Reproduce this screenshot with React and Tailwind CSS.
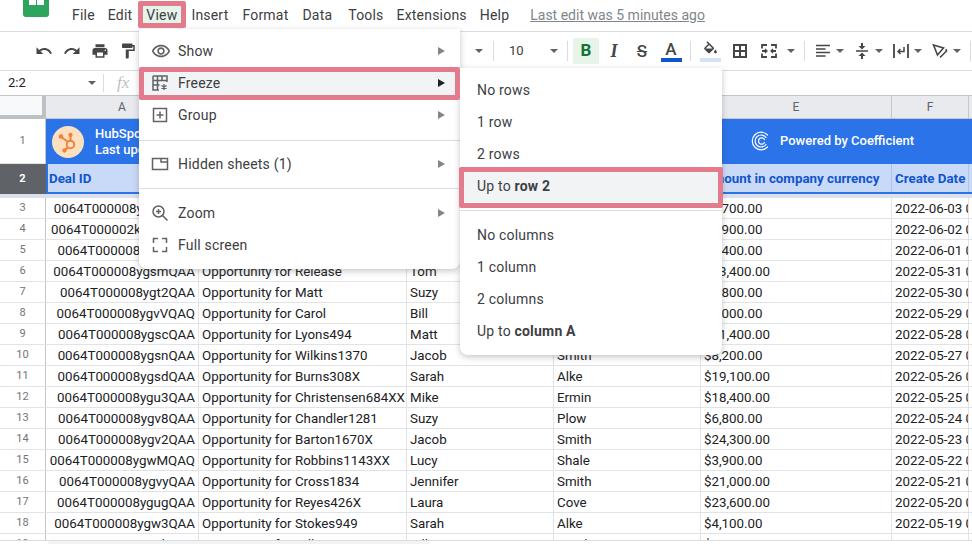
import React from "react";

const rows = [
  [3, "0064T000008ygvmQAA", "Opportunity for Hammond", "Lucy", "Smith", "$9,700.00", "2022-06-03 00:00"],
  [4, "0064T000002kwNHQAY", "Opportunity for Sutton", "Mike", "Plow", "$4,900.00", "2022-06-02 00:00"],
  [5, "0064T000008ygsoQAA", "Opportunity for Dean", "Laura", "Cove", "$2,400.00", "2022-06-01 00:00"],
  [6, "0064T000008ygsmQAA", "Opportunity for Release", "Tom", "Ermin", "$13,400.00", "2022-05-31 00:00"],
  [7, "0064T000008ygt2QAA", "Opportunity for Matt", "Suzy", "Alke", "$7,800.00", "2022-05-30 00:00"],
  [8, "0064T000008ygvVQAQ", "Opportunity for Carol", "Bill", "Shale", "$5,000.00", "2022-05-29 00:00"],
  [9, "0064T000008ygscQAA", "Opportunity for Lyons494", "Matt", "Plow", "$11,400.00", "2022-05-28 00:00"],
  [10, "0064T000008ygsnQAA", "Opportunity for Wilkins1370", "Jacob", "Smith", "$8,200.00", "2022-05-27 00:00"],
  [11, "0064T000008ygsdQAA", "Opportunity for Burns308X", "Sarah", "Alke", "$19,100.00", "2022-05-26 00:00"],
  [12, "0064T000008ygu3QAA", "Opportunity for Christensen684XX", "Mike", "Ermin", "$18,400.00", "2022-05-25 00:00"],
  [13, "0064T000008ygv8QAA", "Opportunity for Chandler1281", "Suzy", "Plow", "$6,800.00", "2022-05-24 00:00"],
  [14, "0064T000008ygv2QAA", "Opportunity for Barton1670X", "Jacob", "Smith", "$24,300.00", "2022-05-23 00:00"],
  [15, "0064T000008ygwMQAQ", "Opportunity for Robbins1143XX", "Lucy", "Shale", "$3,900.00", "2022-05-22 00:00"],
  [16, "0064T000008ygvyQAA", "Opportunity for Cross1834", "Jennifer", "Smith", "$21,000.00", "2022-05-21 00:00"],
  [17, "0064T000008ygugQAA", "Opportunity for Reyes426X", "Laura", "Cove", "$23,600.00", "2022-05-20 00:00"],
  [18, "0064T000008ygw3QAA", "Opportunity for Stokes949", "Sarah", "Alke", "$4,100.00", "2022-05-19 00:00"],
  [19, "0064T000008ygwkQAA", "Opportunity for Hill", "Bill", "Smith", "$1,000.00", "2022-05-18 00:00"],
];

function Mat({ d, size = 18, className = "" }) {
  return (
    <svg viewBox="0 0 24 24" width={size} height={size} fill="currentColor" className={className}>
      <path d={d} />
    </svg>
  );
}

const icons = {
  undo: "M12.5 8c-2.65 0-5.05.99-6.9 2.6L2 7v9h9l-3.62-3.62c1.39-1.16 3.16-1.88 5.12-1.88 3.54 0 6.55 2.31 7.6 5.5l2.37-.78C21.08 11.03 17.15 8 12.5 8z",
  redo: "M18.4 10.6C16.55 8.99 14.15 8 11.5 8c-4.65 0-8.58 3.03-9.96 7.22L3.9 16c1.05-3.19 4.05-5.5 7.6-5.5 1.95 0 3.73.72 5.12 1.88L13 16h9V7l-3.6 3.6z",
  print: "M19 8H5c-1.66 0-3 1.34-3 3v6h4v4h12v-4h4v-6c0-1.66-1.34-3-3-3zm-3 11H8v-5h8v5zm3-7c-.55 0-1-.45-1-1s.45-1 1-1 1 .45 1 1-.45 1-1 1zm-1-9H6v4h12V3z",
  paint: "M18 4V3c0-.55-.45-1-1-1H5c-.55 0-1 .45-1 1v4c0 .55.45 1 1 1h12c.55 0 1-.45 1-1V6h1v4H9v11c0 .55.45 1 1 1h2c.55 0 1-.45 1-1v-9h8V4h-3z",
  eye: "M12 6.5c3.79 0 7.17 2.13 8.82 5.5-1.65 3.37-5.02 5.5-8.82 5.5S4.83 15.37 3.18 12C4.83 8.63 8.21 6.5 12 6.5m0-2C7 4.5 2.73 7.61 1 12c1.73 4.39 6 7.5 11 7.5s9.27-3.11 11-7.5c-1.73-4.39-6-7.5-11-7.5zm0 5c1.38 0 2.5 1.12 2.5 2.5s-1.12 2.5-2.5 2.5-2.5-1.12-2.5-2.5 1.12-2.5 2.5-2.5m0-2c-2.48 0-4.5 2.02-4.5 4.5s2.02 4.5 4.5 4.5 4.5-2.02 4.5-4.5-2.02-4.5-4.5-4.5z",
};

function Caret({ className = "" }) {
  return <div className={"w-0 h-0 border-x-[4px] border-x-transparent border-t-[4px] border-t-[#5f6368] " + className} />;
}

function Divider() {
  return <div className="w-px h-5 bg-[#dadce0]" />;
}

function TopBar() {
  return (
    <div className="h-[32px] border-b border-[#dadce0] flex items-start relative">
      <div className="w-[26px] h-[17px] ml-[23px] bg-[#2da55c] rounded-b-[3px] flex justify-center items-start shrink-0">
        <div className="w-[15px] h-[5px] bg-white flex justify-center">
          <div className="w-px h-full bg-[#2da55c]" />
        </div>
      </div>
      <div className="flex items-center h-[30px] ml-[23px] gap-[14px] text-[14px] tracking-[0.2px] text-[#3c4043]">
        <span>File</span>
        <span className="-ml-[1px]">Edit</span>
        <span className="bg-[#e6f4ea] -ml-[3px] pl-[3px] pr-[6px]">View</span>
        <span className="-ml-[6px]">Insert</span>
        <span>Format</span>
        <span>Data</span>
        <span className="ml-[2px]">Tools</span>
        <span className="-ml-[1px]">Extensions</span>
        <span className="-ml-[1px]">Help</span>
        <span className="ml-[7px] tracking-normal text-[#80868b] underline">Last edit was 5 minutes ago</span>
      </div>
    </div>
  );
}

function Toolbar() {
  return (
    <div className="h-[39px] border-b border-[#dadce0] flex items-center text-[#444746]">
      <div className="flex items-center gap-[10px] ml-[35px] w-[440px]">
        <Mat d={icons.undo} />
        <Mat d={icons.redo} />
        <Mat d={icons.print} />
        <Mat d={icons.paint} />
      </div>
      <Caret />
      <div className="ml-[10px]"><Divider /></div>
      <span className="ml-[15px] w-[31px] text-[13px] text-[#3c4043]">10</span>
      <Caret className="ml-[10px]" />
      <div className="ml-[9px]"><Divider /></div>
      <div className="ml-[5px] w-[26px] h-[26px] bg-[#e6f4ea] rounded-[2px] flex items-center justify-center font-bold text-[17px] text-[#137333]">B</div>
      <div className="w-[28px] text-center ml-[1px] italic font-semibold font-['Liberation_Serif',serif] text-[18px] leading-none text-[#444746]">I</div>
      <div className="w-[28px] text-center font-medium text-[17px] leading-none line-through text-[#444746]">S</div>
      <div className="w-[28px] ml-[1px] flex flex-col items-center">
        <span className="text-[17px] leading-[17px] font-medium text-[#444746]">A</span>
        <div className="w-[21px] h-[4px] bg-[#1155cc]" />
      </div>
      <div className="ml-[5px]"><Divider /></div>
      <div className="ml-[9px] flex flex-col items-center w-[21px]">
        <svg viewBox="0 0 24 24" width="17" height="17" fill="currentColor">
          <path d="M16.6 9.2 7.6 0.5 6.2 1.9l2.4 2.4-5.2 5.2c-.6.6-.6 1.5 0 2.1l5.500 5.500c.3.3.7.4 1 .4s.8-.1 1-.4l5.500-5.500c.7-.5.7-1.500.1-2.400zM5.200 10.500 10 5.700l4.800 4.800H5.200zM19 12s-2 2.200-2 3.500c0 1.100.9 2 2 2s2-.9 2-2c0-1.300-2-3.500-2-3.500z" />
        </svg>
        <div className="w-[21px] h-[4px] bg-[#d3e3f5]" />
      </div>
      <svg viewBox="0 0 18 18" width="18" height="18" className="ml-[10px]" fill="none" stroke="currentColor" strokeWidth="2">
        <path d="M3 3h12v12H3zM9 3v12M3 9h12" />
      </svg>
      <svg viewBox="0 0 18 18" width="18" height="18" className="ml-[11px]" fill="none" stroke="currentColor" strokeWidth="1.800">
        <path d="M7 3H2v3.500M11 3h5v3.500M7 15H2v-3.500M11 15h5v-3.500M2 9h4.500M11.500 9H16" />
        <path d="M5 7l2 2-2 2M13 7l-2 2 2 2" strokeWidth="1.300" />
      </svg>
      <Caret className="ml-[9px]" />
      <div className="ml-[9px]"><Divider /></div>
      <svg viewBox="0 0 18 18" width="18" height="18" className="ml-[9px]" fill="none" stroke="currentColor" strokeWidth="1.700">
        <path d="M2 3.500h14M2 7h9.500M2 10.500h14M2 14h9.500" />
      </svg>
      <Caret className="ml-[4px]" />
      <svg viewBox="0 0 18 18" width="18" height="18" className="ml-[9px]" fill="currentColor">
        <path d="M8 1h2v3h2.500L9 7.500 5.500 4H8zM3 8.200h12v1.600H3zM9 10.500l3.500 3.500H10v3H8v-3H5.500z" />
      </svg>
      <Caret className="ml-[4px]" />
      <svg viewBox="0 0 18 18" width="18" height="18" className="ml-[9px]" fill="none" stroke="currentColor" strokeWidth="1.800">
        <path d="M2 2v14M16 2v14" />
        <path d="M12 5v4.500H7M8.500 7 6 9.500 8.500 12" strokeWidth="1.500" />
      </svg>
      <Caret className="ml-[4px]" />
      <svg viewBox="0 0 18 18" width="18" height="18" className="ml-[9px]" fill="none" stroke="currentColor" strokeWidth="1.600">
        <path d="M2.500 3l10 3-6 7zM9 15.500l7-7M14.500 7.500l1.500 1" />
      </svg>
      <Caret className="ml-[4px]" />
      <div className="ml-[9px]"><Divider /></div>
    </div>
  );
}

function FormulaBar() {
  return (
    <div className="h-[24px] flex items-center relative">
      <span className="ml-[8px] w-[80px] text-[13px] text-[#202124]">2:2</span>
      <Caret />
      <div className="ml-[7px]"><div className="w-px h-[18px] bg-[#dadce0]" /></div>
      <span className="ml-[13px] italic text-[17px] text-[#bdc1c6] font-['Liberation_Serif',serif]">fx</span>
    </div>
  );
}

function RowHead({ n, active, className = "" }) {
  return (
    <div className={"w-[46px] shrink-0 flex items-center justify-center text-[11px] border-r " + (active ? "bg-[#5f6368] text-white font-bold border-[#5f6368] " : "bg-white text-[#70757a] border-[#c4c7c5] ") + className}>
      {n}
    </div>
  );
}

function Cell({ w, right, children }) {
  return (
    <div className={"shrink-0 h-full border-r border-[#e1e3e6] px-[3px] pt-[1px] overflow-hidden whitespace-nowrap flex items-center " + w + (right ? " justify-end" : "")}>
      {children}
    </div>
  );
}

function ColHeads() {
  const cols = [
    ["A", "w-[153px]"],
    ["B", "w-[208px]"],
    ["C", "w-[147px]"],
    ["D", "w-[147px]"],
    ["E", "w-[191px]"],
    ["F", "w-[77px]"],
    ["", "w-[10px]"],
  ];
  return (
    <div className="h-[24px] flex bg-[#e8eaed] border-t border-[#c4c7c5] text-[12px] text-[#5f6368]">
      <div className="w-[46px] shrink-0 border-r-[4px] border-b-[4px] border-[#bdc1c6] bg-[#f8f9fa]" />
      {cols.map(([c, w]) => (
        <div key={c} className={"shrink-0 border-r border-b border-[#c4c7c5] flex items-center justify-center " + w}>{c}</div>
      ))}
    </div>
  );
}

function BannerRow() {
  return (
    <div className="h-[45px] flex">
      <RowHead n="1" className="border-b border-b-[#e1e3e6]" />
      <div className="flex-1 bg-[#2a73e8] flex items-center text-white text-[13px] font-medium relative overflow-hidden">
        <div className="ml-[6px] w-[32px] h-[32px] rounded-full bg-[#fde0bf] flex items-center justify-center shrink-0">
          <svg viewBox="0 0 24 24" width="24" height="24" fill="none" stroke="#f0803c" strokeWidth="1.900" strokeLinecap="round">
            <circle cx="14.500" cy="14.500" r="3.800" />
            <path d="M14.500 10.500V6M11.500 11.500 6 7.500M11.800 17.500 9 20" />
            <circle cx="14.500" cy="5" r="1.200" fill="#f0803c" />
            <circle cx="5" cy="6.500" r="1.400" fill="#f0803c" />
            <circle cx="8.500" cy="20.500" r="1.200" fill="#f0803c" />
          </svg>
        </div>
        <div className="ml-[11px] leading-[16px]">
          <div>HubSpot Deals</div>
          <div>Last updated</div>
        </div>
        <div className="absolute left-[705px] top-0 h-full flex items-center gap-[9px] pb-[1px]">
          <svg viewBox="0 0 20 20" width="20" height="20" fill="none" stroke="white" strokeWidth="1.200" strokeLinecap="round">
            <path d="M16.500 4A8.800 8.800 0 1 0 16.500 16" />
            <path d="M15 6.500A6 6 0 1 0 15 13.500" />
            <path d="M13.500 8.500A3.200 3.200 0 1 0 13.500 11.500" />
          </svg>
          <span className="text-[13px]">Powered by Coefficient</span>
        </div>
      </div>
    </div>
  );
}

function HeaderRow() {
  const h = "font-bold text-[#1155cc]";
  return (
    <div className="h-[30px] flex">
      <RowHead n="2" active />
      <div className="flex-1 flex bg-[#c9daf8] border-b-2 border-[#2a73e8] text-[13.33px]">
        <Cell w="w-[153px] !pl-[1px] border-l-2 border-l-[#2a73e8] !border-r-[#a9c4f0]"><span className={h}>Deal ID</span></Cell>
        <Cell w="w-[208px] !border-r-[#a9c4f0]"><span className={h}>Deal Name</span></Cell>
        <Cell w="w-[147px] !border-r-[#a9c4f0]"><span className={h}>Owner</span></Cell>
        <Cell w="w-[147px] !border-r-[#a9c4f0]"><span className={h}>Last</span></Cell>
        <Cell w="w-[191px] !border-r-[#a9c4f0]"><span className={h}>Amount in company currency</span></Cell>
        <Cell w="w-[77px] !border-r-[#a9c4f0]"><span className={h}>Create Date</span></Cell>
        <Cell w="w-[10px]"><span className={h}>C</span></Cell>
      </div>
    </div>
  );
}

function DataRow({ r }) {
  return (
    <div className="h-[21px] flex border-b border-[#e1e3e6] text-[13.33px] text-[#202124]">
      <RowHead n={r[0]} />
      <Cell w="w-[153px]" right>{r[1]}</Cell>
      <Cell w="w-[208px]">{r[2]}</Cell>
      <Cell w="w-[147px]">{r[3]}</Cell>
      <Cell w="w-[147px]">{r[4]}</Cell>
      <Cell w="w-[191px]">{r[5]}</Cell>
      <Cell w="w-[77px]">{r[6]}</Cell>
      <Cell w="w-[10px]">0</Cell>
    </div>
  );
}

function Arrow({ dark }) {
  return <div className={"w-0 h-0 border-y-[4px] border-y-transparent border-l-[7px] " + (dark ? "border-l-[#202124]" : "border-l-[#80868b]")} />;
}

function MenuItem({ icon, label, active }) {
  return (
    <div className={"h-[32px] flex items-center pl-[12px] pr-[15px] " + (active ? "bg-[#f1f3f4]" : "")}>
      <div className="w-[27px] flex text-[#5f6368]">{icon}</div>
      <span className="flex-1">{label}</span>
      <Arrow dark={active} />
    </div>
  );
}

function ViewMenu() {
  return (
    <div className="absolute left-[139px] top-[29px] w-[321px] h-[240px] bg-white rounded-b-[8px] shadow-[0_2px_6px_rgba(60,64,67,0.3)] text-[14px] tracking-[0.2px] text-[#3c4043] pt-[6px]">
      <MenuItem label="Show" icon={<Mat d={icons.eye} size={20} />} />
      <MenuItem
        active
        label="Freeze"
        icon={
          <svg viewBox="0 0 18 18" width="18" height="18" fill="none" stroke="currentColor" strokeWidth="1.500">
            <path d="M2 2h14v6M2 2v14h6M2 6.500h14M2 11h6.500M6.500 2v14M11 2v5" />
            <path d="M13 10v6M10.400 11.500l5.200 3M15.600 11.500l-5.200 3" strokeWidth="1.300" />
          </svg>
        }
      />
      <MenuItem
        label="Group"
        icon={
          <svg viewBox="0 0 18 18" width="18" height="18" fill="none" stroke="currentColor" strokeWidth="1.500">
            <path d="M2.500 2.500h13v13h-13zM9 5.500v7M5.500 9h7" />
          </svg>
        }
      />
      <div className="h-px bg-[#dadce0] mt-[9px] mb-[7px]" />
      <MenuItem
        label="Hidden sheets (1)"
        icon={
          <svg viewBox="0 0 18 18" width="18" height="18" fill="none" stroke="currentColor" strokeWidth="1.500">
            <path d="M1.500 3.500h15v11h-15zM10 3.500v3.500h6.500" />
          </svg>
        }
      />
      <div className="h-px bg-[#dadce0] mt-[8px] mb-[8px]" />
      <MenuItem
        label="Zoom"
        icon={
          <svg viewBox="0 0 18 18" width="18" height="18" fill="none" stroke="currentColor" strokeWidth="1.500">
            <circle cx="7.500" cy="7.500" r="5.500" />
            <path d="M11.500 11.500l5 5M7.500 5v5M5 7.500h5" />
          </svg>
        }
      />
      <div className="h-[32px] flex items-center pl-[12px]">
        <div className="w-[27px] flex text-[#5f6368]">
          <svg viewBox="0 0 18 18" width="18" height="18" fill="none" stroke="currentColor" strokeWidth="1.500">
            <path d="M2.500 7V2.500H7M11 2.500h4.500V7M2.500 11v4.500H7M11 15.500h4.500V11" />
          </svg>
        </div>
        <span>Full screen</span>
      </div>
    </div>
  );
}

function SubItem({ children, active }) {
  return <div className={"h-[32px] flex items-center pl-[17px] " + (active ? "bg-[#f1f3f4]" : "")}>{children}</div>;
}

function FreezeMenu() {
  return (
    <div className="absolute left-[460px] top-[68px] w-[262px] h-[287px] bg-white rounded-b-[8px] shadow-[0_2px_6px_rgba(60,64,67,0.3)] text-[14px] tracking-[0.2px] text-[#3c4043] pt-[6px]">
      <SubItem>No rows</SubItem>
      <SubItem>1 row</SubItem>
      <SubItem>2 rows</SubItem>
      <SubItem active><span>Up to <b className="font-bold">row 2</b></span></SubItem>
      <div className="h-px bg-[#dadce0] my-[8px]" />
      <SubItem>No columns</SubItem>
      <SubItem>1 column</SubItem>
      <SubItem>2 columns</SubItem>
      <SubItem><span>Up to <b className="font-bold">column A</b></span></SubItem>
    </div>
  );
}

export default function App() {
  return (
    <div className="w-[972px] h-[544px] relative overflow-hidden bg-white font-['Roboto',sans-serif]">
      <TopBar />
      <Toolbar />
      <FormulaBar />
      <ColHeads />
      <BannerRow />
      <HeaderRow />
      <div className="h-[4px] flex bg-[#dbe1ea]" />
      <div className="h-[343px] overflow-hidden border-b border-[#dadce0]">
        {rows.map((r) => (
          <DataRow key={r[0]} r={r} />
        ))}
      </div>
      <div className="h-[3px] ml-[48px] w-[382px] bg-[#f1f3f4] rounded-t-[3px]" />
      <ViewMenu />
      <FreezeMenu />
      {/* red callouts drawn over the screenshot */}
      <div className="absolute left-[138px] top-[1px] w-[48px] h-[27px] border-[5px] border-[#e27b8b] rounded-[2px]" />
      <div className="absolute left-[139px] top-[67px] w-[321px] h-[33px] border-[5px] border-[#e27b8b] rounded-[2px]" />
      <div className="absolute left-[459px] top-[167px] w-[264px] h-[41px] border-[5px] border-[#e27b8b] rounded-[2px]" />
    </div>
  );
}
